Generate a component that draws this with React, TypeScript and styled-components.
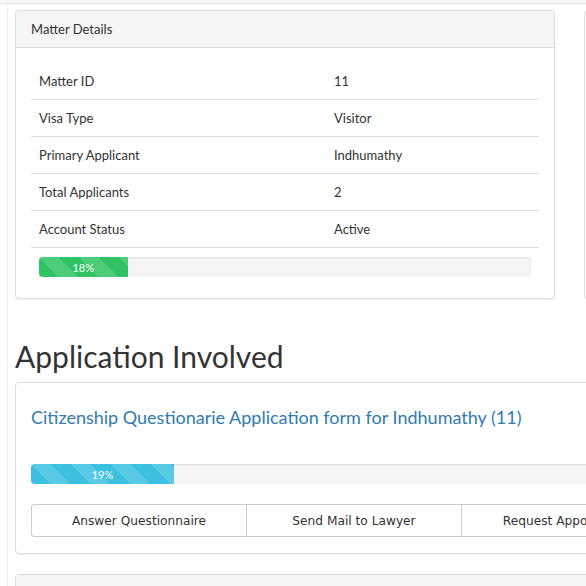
import React from 'react'
import styled, { createGlobalStyle } from 'styled-components'

const GlobalStyle = createGlobalStyle`
  html, body {
    margin: 0;
    padding: 0;
    background: #fff;
    overflow: hidden;
  }
  body {
    font-family: Lato, "Open Sans", sans-serif;
    color: #333;
  }
  * {
    box-sizing: border-box;
  }
`

type Row = { label: string; value: string }

const rows: Row[] = [
  { label: 'Matter ID', value: '11' },
  { label: 'Visa Type', value: 'Visitor' },
  { label: 'Primary Applicant', value: 'Indhumathy' },
  { label: 'Total Applicants', value: '2' },
  { label: 'Account Status', value: 'Active' },
]

const actions = ['Answer Questionnaire', 'Send Mail to Lawyer', 'Request Appointment']

export default function App() {
  return (
    <Page>
      <GlobalStyle />
      <TopStrip />
      <Wrapper>
        <TopRow>
          <LeftCol>
            <Panel>
              <PanelHeading>Matter Details</PanelHeading>
              <PanelBody>
                <DetailsTable>
                  {rows.map(r => (
                    <TableRow key={r.label}>
                      <Cell>{r.label}</Cell>
                      <Cell>{r.value}</Cell>
                    </TableRow>
                  ))}
                </DetailsTable>
                <ProgressHolder>
                  <Progress>
                    <ProgressFill $color="#2fc363" style={{ width: '18%' }}>
                      18%
                    </ProgressFill>
                  </Progress>
                </ProgressHolder>
              </PanelBody>
            </Panel>
          </LeftCol>
          <RightCol>
            <SidePanel />
          </RightCol>
        </TopRow>

        <SectionTitle>Application Involved</SectionTitle>

        <AppPanel>
          <AppLink href="#">
            Citizenship Questionarie Application form for Indhumathy (11)
          </AppLink>
          <AppProgress>
            <ProgressFill $color="#3bc0e0" style={{ width: '19%' }}>
              19%
            </ProgressFill>
          </AppProgress>
          <ButtonGroup>
            {actions.map(a => (
              <ActionButton key={a}>{a}</ActionButton>
            ))}
          </ButtonGroup>
        </AppPanel>

        <NextPanel>
          <NextHeading />
        </NextPanel>
      </Wrapper>
    </Page>
  )
}

const Page = styled.div`
  width: 586px;
  height: 586px;
  overflow: hidden;
  position: relative;
`

const TopStrip = styled.div`
  height: 4px;
  background: #f7f7f7;
  border-bottom: 1px solid #e6e6e6;
`

const Wrapper = styled.div`
  margin-left: 7px;
  border-left: 1px solid #f1f1f1;
  padding: 6px 0 0 7px;
  width: 1000px;
`

const TopRow = styled.div`
  display: flex;
  gap: 29px;
`

const LeftCol = styled.div`
  width: 540px;
`

const RightCol = styled.div`
  width: 400px;
`

const Panel = styled.div`
  border: 1px solid #dddddd;
  border-radius: 4px;
  background: #fff;
  box-shadow: 0 1px 1px rgba(0, 0, 0, 0.05);
`

const SidePanel = styled(Panel)`
  height: 289px;
`

const PanelHeading = styled.div`
  height: 37px;
  display: flex;
  align-items: center;
  padding: 0 15px;
  background: #f5f5f5;
  border-bottom: 1px solid #dddddd;
  border-radius: 3px 3px 0 0;
  font-size: 13px;
  color: #333;
`

const PanelBody = styled.div`
  padding: 15px 15px 21px;
`

const DetailsTable = styled.div`
  display: flex;
  flex-direction: column;
`

const TableRow = styled.div`
  display: grid;
  grid-template-columns: 295px 1fr;
  height: 37px;
  align-items: center;
  border-bottom: 1px solid #dddddd;
  font-size: 13px;
  color: #333;
`

const Cell = styled.div`
  padding: 0 8px;
`

const ProgressHolder = styled.div`
  padding: 9px 8px 0;
`

const Progress = styled.div`
  height: 20px;
  background: #f5f5f5;
  border-radius: 4px;
  overflow: hidden;
  box-shadow: inset 0 1px 2px rgba(0, 0, 0, 0.1);
  display: flex;
`

const ProgressFill = styled.div<{ $color: string }>`
  height: 100%;
  background-color: ${p => p.$color};
  background-image: linear-gradient(
    45deg,
    rgba(255, 255, 255, 0.15) 25%,
    transparent 25%,
    transparent 50%,
    rgba(255, 255, 255, 0.15) 50%,
    rgba(255, 255, 255, 0.15) 75%,
    transparent 75%,
    transparent
  );
  background-size: 40px 40px;
  color: #fff;
  font-size: 11px;
  font-weight: 400;
  display: flex;
  align-items: center;
  justify-content: center;
`

const SectionTitle = styled.h2`
  margin: 0;
  padding-top: 39px;
  height: 83px;
  font-size: 30px;
  font-weight: 400;
  line-height: 36px;
  color: #333;
`

const AppPanel = styled(Panel)`
  width: 785px;
  padding: 19px 15px 16px;
`

const AppLink = styled.a`
  display: block;
  font-size: 18px;
  line-height: 30px;
  color: #2f7bb2;
  text-decoration: none;
`

const AppProgress = styled(Progress)`
  margin-top: 32px;
`

const ButtonGroup = styled.div`
  display: flex;
  margin-top: 20px;
`

const ActionButton = styled.button`
  width: 216px;
  height: 33px;
  margin-left: -1px;
  background: #fff;
  border: 1px solid #cccccc;
  font-family: 'DejaVu Sans', Verdana, sans-serif;
  font-size: 12.2px;
  color: #333;
  white-space: nowrap;
  &:first-child {
    margin-left: 0;
    border-radius: 3px 0 0 3px;
  }
`

const NextPanel = styled(Panel)`
  margin-top: 20px;
  width: 785px;
  height: 80px;
`

const NextHeading = styled.div`
  height: 36px;
  background: #f5f5f5;
  border-bottom: 1px solid #dddddd;
`
